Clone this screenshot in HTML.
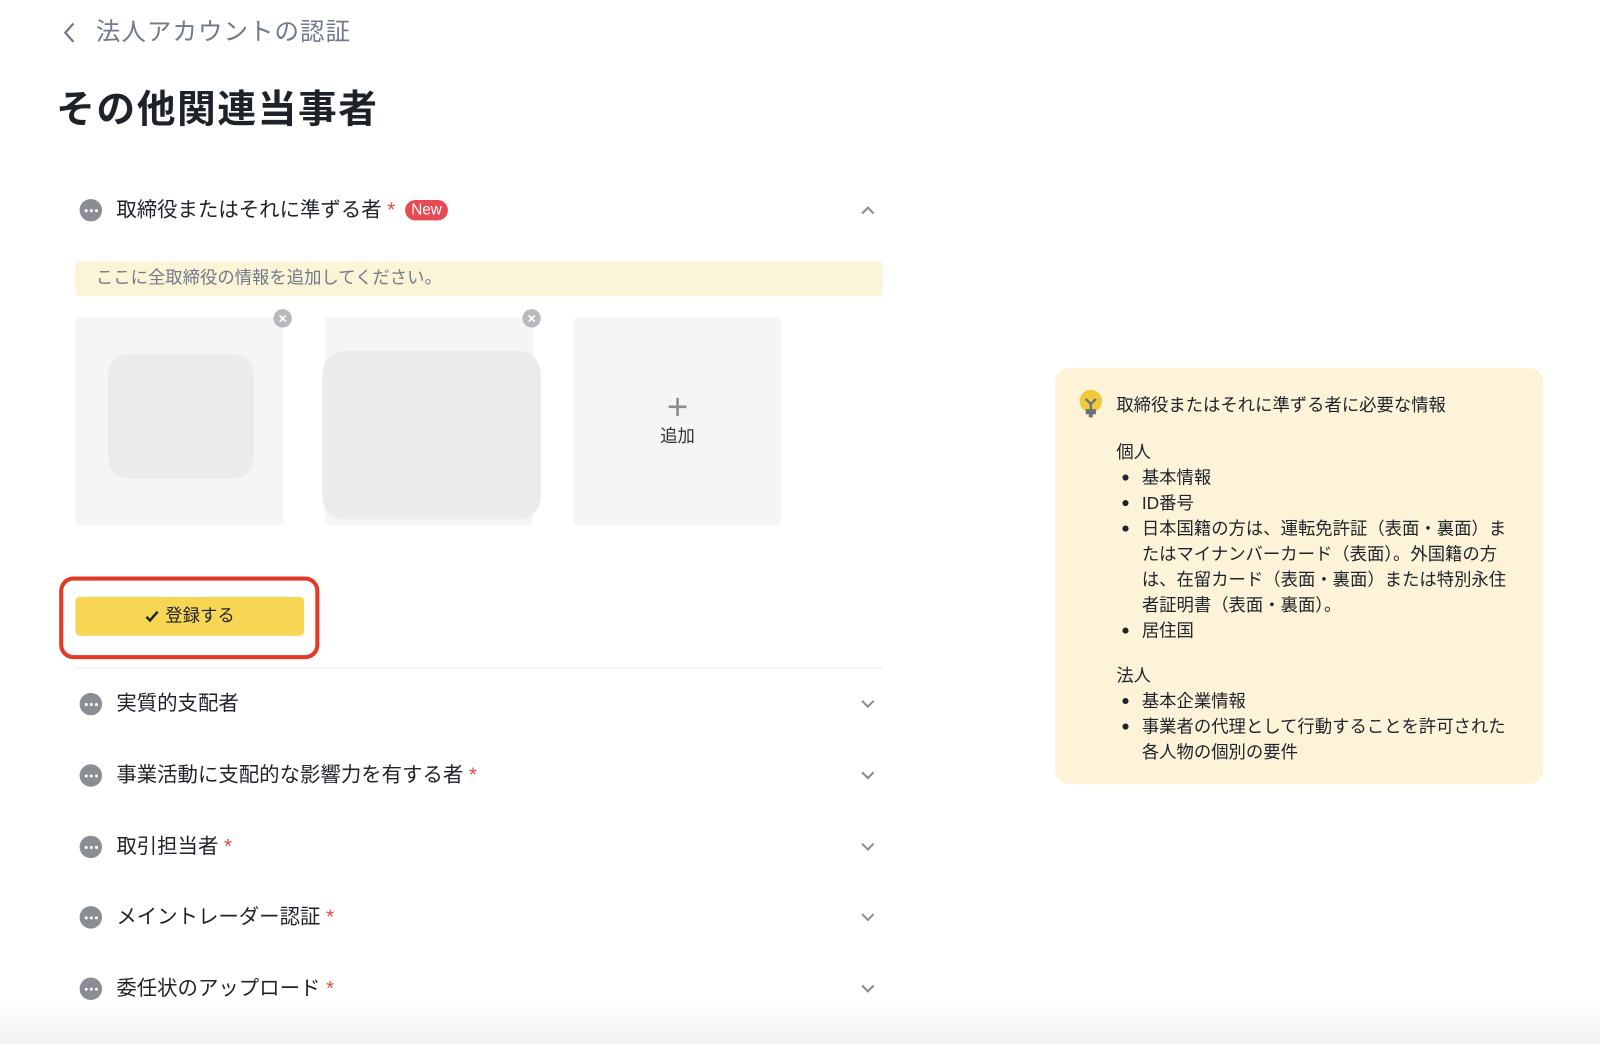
<!DOCTYPE html>
<html><head><meta charset="utf-8"><style>
*{margin:0;padding:0;box-sizing:border-box}
body{width:1600px;height:1044px;background:#fff;font-family:"Liberation Sans","Noto Sans CJK JP",sans-serif;color:#1e2329;position:relative;overflow:hidden}
#w{position:absolute;left:0;top:0;width:1568px;height:1024px;transform:scale(1.0204);transform-origin:0 0}
.a{position:absolute;white-space:nowrap}
.dot{position:absolute;width:22px;height:22px;border-radius:50%;background:#8a8d93}
.dot:after{content:"";position:absolute;left:5px;top:9.5px;width:3px;height:3px;background:#fff;border-radius:50%;box-shadow:5px 0 #fff,10px 0 #fff}
.row{font-size:20px;line-height:24px}
.st{color:#e84545}
.chev{position:absolute;width:9px;height:9px;border-right:2px solid #8a8d93;border-bottom:2px solid #8a8d93;transform:rotate(45deg)}
.card{position:absolute;top:311px;width:204px;height:204px;background:#f5f5f5;border-radius:4px}
.x{position:absolute;width:18px;height:18px;border-radius:50%;background:#b7b9bd;color:#fff;font-size:14px;line-height:18px;text-align:center;font-weight:bold}
.p{font-size:17px;line-height:25px}
.b{position:absolute;width:6px;height:6px;border-radius:50%;background:#1e2329}
</style></head><body>
<div style="position:absolute;left:0;right:0;top:1000px;height:44px;background:linear-gradient(#fff,#f2f2f2)"></div>
<div id="w">
<svg class="a" style="left:61px;top:21px" width="14" height="22" viewBox="0 0 14 22"><path d="M11 2L3 11l8 9" stroke="#707a8a" stroke-width="2.2" fill="none"/></svg>
<div class="a" style="left:94px;top:16px;font-size:24px;line-height:32px;color:#707a8a;letter-spacing:1px">法人アカウントの認証</div>
<div class="a" style="left:55px;top:82px;font-size:38px;line-height:52px;font-weight:bold;letter-spacing:1.5px">その他関連当事者</div>

<div class="dot" style="left:78px;top:195px"></div>
<div class="a row" style="left:114px;top:194px">取締役またはそれに準ずる者 <span class="st">*</span></div>
<div class="a" style="left:397px;top:196px;background:#e84a55;color:#fff;font-size:15px;line-height:20px;padding:0 6px;border-radius:10px">New</div>
<div class="chev" style="left:846px;top:204px;transform:rotate(225deg)"></div>

<div class="a" style="left:74px;top:256px;width:791px;height:34px;background:#fcf4d6;border-radius:4px;font-size:17px;line-height:34px;color:#707a8a;padding-left:20px">ここに全取締役の情報を追加してください。</div>

<div class="card" style="left:74px"><div style="position:absolute;left:32px;top:36px;width:143px;height:122px;background:#ebebeb;border-radius:20px"></div></div>
<div class="x" style="left:268px;top:303px">×</div>
<div class="card" style="left:318px"></div>
<div style="position:absolute;left:316px;top:344px;width:214px;height:165px;background:#ebebeb;border-radius:22px"></div>
<div class="x" style="left:512px;top:303px">×</div>
<div class="card" style="left:562px"></div>
<div class="a" style="left:562px;top:380px;width:204px;text-align:center;font-size:36px;line-height:38px;color:#8a8d93;font-weight:300">+</div>
<div class="a" style="left:562px;top:417px;width:204px;text-align:center;font-size:17px;line-height:22px;color:#333">追加</div>

<div style="position:absolute;left:58px;top:565px;width:255px;height:81px;border:4.5px solid #e23a24;border-radius:14px"></div>
<div class="a" style="left:74px;top:585px;width:224px;height:38px;background:#f7d654;border-radius:4px;text-align:center;font-size:17px;line-height:38px"><svg width="14" height="12" viewBox="0 0 14 12" style="vertical-align:-1px;margin-right:6px"><path d="M1.5 6.5l3.5 3.5 7.5-8.5" stroke="#1e2329" stroke-width="2.4" fill="none"/></svg>登録する</div>
<div style="position:absolute;left:74px;top:654px;width:791px;height:1px;background:#eaecef"></div>

<div class="dot" style="left:78px;top:679px"></div><div class="a row" style="left:114px;top:678px">実質的支配者</div><div class="chev" style="left:846px;top:683px"></div>
<div class="dot" style="left:78px;top:749px"></div><div class="a row" style="left:114px;top:748px">事業活動に支配的な影響力を有する者 <span class="st">*</span></div><div class="chev" style="left:846px;top:753px"></div>
<div class="dot" style="left:78px;top:819px"></div><div class="a row" style="left:114px;top:818px">取引担当者 <span class="st">*</span></div><div class="chev" style="left:846px;top:823px"></div>
<div class="dot" style="left:78px;top:888px"></div><div class="a row" style="left:114px;top:887px">メイントレーダー認証 <span class="st">*</span></div><div class="chev" style="left:846px;top:892px"></div>
<div class="dot" style="left:78px;top:958px"></div><div class="a row" style="left:114px;top:957px">委任状のアップロード <span class="st">*</span></div><div class="chev" style="left:846px;top:962px"></div>

<div style="position:absolute;left:1034px;top:361px;width:478px;height:407px;background:#fcf3d8;border-radius:12px"></div>
<svg class="a" style="left:1056px;top:381px" width="26" height="30" viewBox="0 0 26 30"><circle cx="13" cy="12" r="11" fill="#f0c93a"/><path d="M8 10l5 5 5-5M13 15v6" stroke="#6b6f76" stroke-width="2.2" fill="none"/><rect x="8" y="20" width="10" height="5" fill="#6b6f76"/><rect x="11" y="25" width="4" height="3" fill="#6b6f76"/></svg>
<div class="a p" style="left:1094px;top:385px">取締役またはそれに準ずる者に必要な情報</div>
<div class="a p" style="left:1094px;top:431px">個人</div>
<div class="b" style="left:1100px;top:465px"></div><div class="b" style="left:1100px;top:490px"></div><div class="b" style="left:1100px;top:515px"></div><div class="b" style="left:1100px;top:615px"></div>
<div class="b" style="left:1100px;top:684px"></div><div class="b" style="left:1100px;top:709px"></div>
<div class="a p" style="left:1119px;top:456px">基本情報<br>ID番号<br>日本国籍の方は、運転免許証（表面・裏面）ま<br>たはマイナンバーカード（表面）。外国籍の方<br>は、在留カード（表面・裏面）または特別永住<br>者証明書（表面・裏面）。<br>居住国</div>
<div class="a p" style="left:1094px;top:650px">法人</div>
<div class="a p" style="left:1119px;top:675px">基本企業情報<br>事業者の代理として行動することを許可された<br>各人物の個別の要件</div>
</div>
</body></html>
